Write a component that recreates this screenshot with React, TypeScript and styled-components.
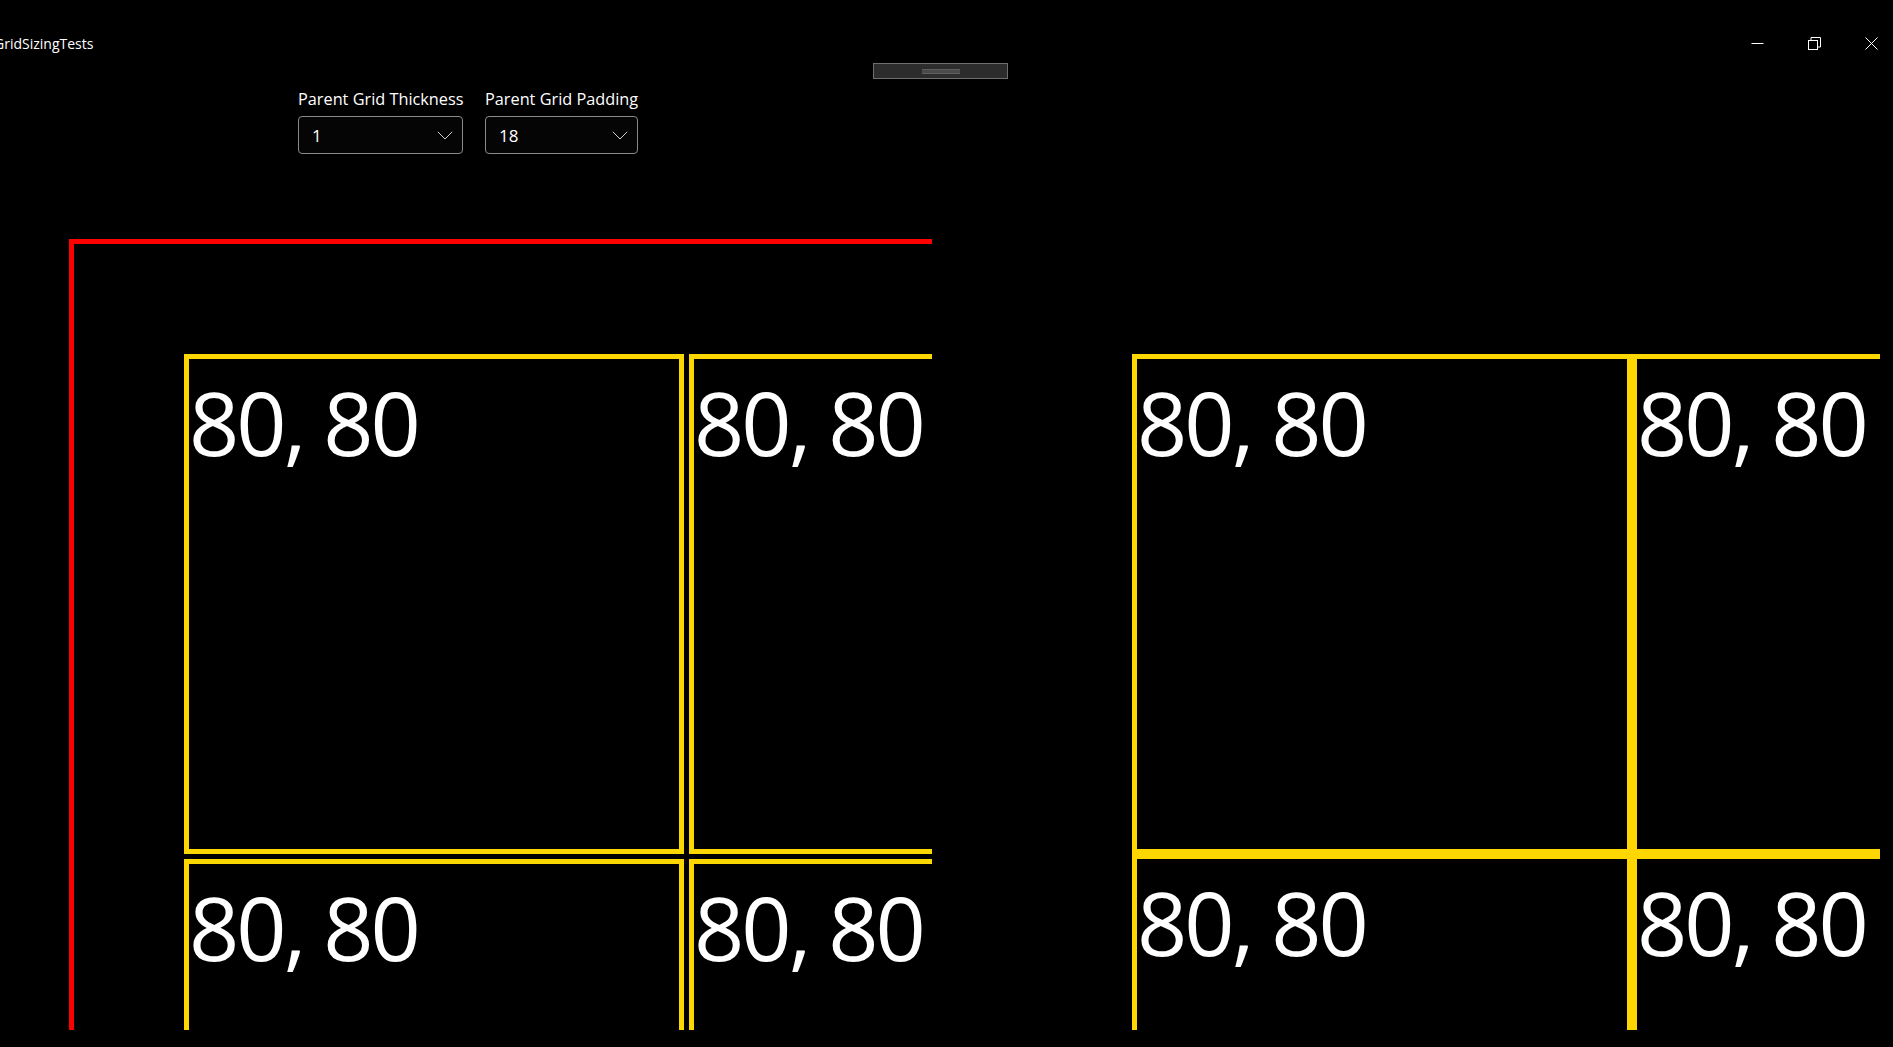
import styled, { createGlobalStyle } from "styled-components"

const GlobalStyle = createGlobalStyle`
  html, body {
    margin: 0;
    padding: 0;
    background: #000000;
    overflow: hidden;
  }
`

const YELLOW = "#ffd700"
const RED = "#ff0000"

function CaptionIcon({ kind }: { kind: "min" | "restore" | "close" }) {
  if (kind === "min") {
    return (
      <svg width="13" height="13" viewBox="0 0 13 13">
        <path d="M0.5 6.5 H12.5" stroke="#fff" strokeWidth="1" fill="none" />
      </svg>
    )
  }
  if (kind === "restore") {
    return (
      <svg width="13" height="13" viewBox="0 0 13 13">
        <rect x="0.5" y="3.5" width="9" height="9" stroke="#fff" strokeWidth="1" fill="none" />
        <path d="M3 3.5 V0.5 H12.5 V10 H9.5" stroke="#fff" strokeWidth="1" fill="none" />
      </svg>
    )
  }
  return (
    <svg width="13" height="13" viewBox="0 0 13 13">
      <path d="M0.5 0.5 L12.5 12.5 M12.5 0.5 L0.5 12.5" stroke="#fff" strokeWidth="1" fill="none" />
    </svg>
  )
}

function Chevron() {
  return (
    <svg width="16" height="9" viewBox="0 0 16 9">
      <path d="M0.8 0.8 L8 8 L15.2 0.8" stroke="#d0d0d0" strokeWidth="1" fill="none" />
    </svg>
  )
}

const fields = [
  { label: "Parent Grid Thickness", value: "1", width: 165 },
  { label: "Parent Grid Padding", value: "18", width: 153 },
]

function Panel({ border, gap }: { border: string; gap: number }) {
  return (
    <Frame $border={border} $gap={gap}>
      {[0, 1, 2, 3].map((i) => (
        <Cell key={i}>80, 80</Cell>
      ))}
    </Frame>
  )
}

export default function App() {
  return (
    <Page>
      <GlobalStyle />
      <TitleBar>
        <Title>GridSizingTests</Title>
        <Captions>
          <CaptionButton><CaptionIcon kind="min" /></CaptionButton>
          <CaptionButton><CaptionIcon kind="restore" /></CaptionButton>
          <CaptionButton><CaptionIcon kind="close" /></CaptionButton>
        </Captions>
      </TitleBar>
      <DragHandle>
        <Grip />
      </DragHandle>
      <Controls>
        {fields.map((f) => (
          <Field key={f.label} $width={f.width}>
            <Label>{f.label}</Label>
            <Combo>
              <span>{f.value}</span>
              <Chevron />
            </Combo>
          </Field>
        ))}
      </Controls>
      <Canvas>
        <Column>
          <Panel border={RED} gap={5} />
        </Column>
        <Column>
          <Panel border="transparent" gap={0} />
        </Column>
      </Canvas>
    </Page>
  )
}

const Page = styled.div`
  position: relative;
  width: 1893px;
  height: 1047px;
  background: #000000;
  color: #ffffff;
  overflow: hidden;
  display: flex;
  flex-direction: column;
  font-family: "Open Sans", "Noto Sans", sans-serif;
`

const TitleBar = styled.div`
  height: 86px;
  flex: none;
  display: flex;
  align-items: center;
`

const Title = styled.div`
  flex: 1;
  margin-left: -6px;
  font-size: 14px;
  white-space: nowrap;
`

const Captions = styled.div`
  display: flex;
  margin-right: -7px;
`

const CaptionButton = styled.div`
  width: 57px;
  height: 40px;
  display: flex;
  align-items: center;
  justify-content: center;
  svg {
    display: block;
  }
`

const DragHandle = styled.div`
  position: absolute;
  left: 873px;
  top: 63px;
  width: 135px;
  height: 16px;
  box-sizing: border-box;
  background: #2c2c2c;
  border: 1px solid #6e6e6e;
  display: flex;
  align-items: center;
  justify-content: center;
`

const Grip = styled.div`
  width: 38px;
  height: 5px;
  box-sizing: border-box;
  background: #4a4a4a;
  border-top: 1px solid #5e5e5e;
  border-bottom: 1px solid #5e5e5e;
`

const Controls = styled.div`
  flex: none;
  display: flex;
  gap: 22px;
  padding-left: 298px;
  margin-top: 3px;
`

const Field = styled.div<{ $width: number }>`
  width: ${(p) => p.$width}px;
  display: flex;
  flex-direction: column;
  gap: 7px;
`

const Label = styled.div`
  font-size: 16.3px;
  line-height: 20px;
  white-space: nowrap;
`

const Combo = styled.div`
  height: 38px;
  box-sizing: border-box;
  border: 1px solid #8a8a8a;
  border-radius: 4px;
  background: #050505;
  display: flex;
  align-items: center;
  justify-content: space-between;
  padding: 0 9px 0 13px;
  font-size: 17px;
  svg {
    display: block;
  }
`

const Canvas = styled.div`
  flex: none;
  height: 876px;
  display: flex;
  gap: 16px;
`

const Column = styled.div`
  width: 932px;
  height: 100%;
  flex: none;
  overflow: hidden;
  box-sizing: border-box;
  padding: 85px 0 0 69px;
`

const Frame = styled.div<{ $border: string; $gap: number }>`
  width: max-content;
  border: 5px solid ${(p) => p.$border};
  padding: 110px;
  display: grid;
  grid-template-columns: repeat(2, 500px);
  grid-auto-rows: 500px;
  gap: ${(p) => p.$gap}px;
`

const Cell = styled.div`
  box-sizing: border-box;
  border: 5px solid ${YELLOW};
  padding-top: 3px;
  font-size: 88px;
  line-height: normal;
  letter-spacing: -3px;
  white-space: nowrap;
  overflow: hidden;
`
